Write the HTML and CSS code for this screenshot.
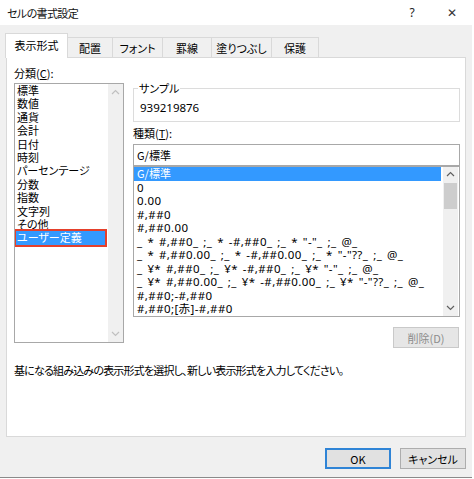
FILE: index.html
```html
<!DOCTYPE html>
<html lang="ja">
<head>
<meta charset="utf-8">
<title>セルの書式設定</title>
<link rel="stylesheet" href="styles.css">
</head>
<body>
<div class="window">
  <div class="titlebar">
    <span class="title">セルの書式設定</span>
    <span class="help">?</span>
    <span class="close">✕</span>
  </div>

  <div class="tabs">
    <div class="tab active t1">表示形式</div>
    <div class="tab t2">配置</div>
    <div class="tab t3">フォント</div>
    <div class="tab t4">罫線</div>
    <div class="tab t5">塗りつぶし</div>
    <div class="tab t6">保護</div>
  </div>

  <div class="panel">
    <div class="panel-main">
      <div class="col-left">
        <div class="label">分類(<u>C</u>):</div>
        <div class="listbox cat">
          <div class="items">
            <div class="item">標準</div>
            <div class="item">数値</div>
            <div class="item">通貨</div>
            <div class="item">会計</div>
            <div class="item">日付</div>
            <div class="item">時刻</div>
            <div class="item">パーセンテージ</div>
            <div class="item">分数</div>
            <div class="item">指数</div>
            <div class="item">文字列</div>
            <div class="item">その他</div>
            <div class="item selected marked">ユーザー定義</div>
          </div>
          <div class="scrollbar disabled">
            <div class="arrow"><svg width="9" height="6" viewBox="0 0 9 6"><path d="M1 5 L4.5 1.5 L8 5" /></svg></div>
            <div class="arrow"><svg width="9" height="6" viewBox="0 0 9 6"><path d="M1 1 L4.5 4.5 L8 1" /></svg></div>
          </div>
        </div>
      </div>

      <div class="col-right">
        <fieldset class="sample">
          <legend>サンプル</legend>
          <div class="sample-value">939219876</div>
        </fieldset>
        <div class="label type-label">種類(<u>T</u>):</div>
        <div class="input">G/標準</div>
        <div class="listbox fmt">
          <div class="items">
            <div class="item selected">G/標準</div>
            <div class="item">0</div>
            <div class="item">0.00</div>
            <div class="item">#,##0</div>
            <div class="item">#,##0.00</div>
            <div class="item">_ * #,##0_ ;_ * -#,##0_ ;_ * "-"_ ;_ @_</div>
            <div class="item">_ * #,##0.00_ ;_ * -#,##0.00_ ;_ * "-"??_ ;_ @_</div>
            <div class="item">_ ¥* #,##0_ ;_ ¥* -#,##0_ ;_ ¥* "-"_ ;_ @_</div>
            <div class="item">_ ¥* #,##0.00_ ;_ ¥* -#,##0.00_ ;_ ¥* "-"??_ ;_ @_</div>
            <div class="item">#,##0;-#,##0</div>
            <div class="item">#,##0;[赤]-#,##0</div>
          </div>
          <div class="scrollbar">
            <div class="arrow"><svg width="9" height="6" viewBox="0 0 9 6"><path d="M1 5 L4.5 1.5 L8 5" /></svg></div>
            <div class="thumb"></div>
            <div class="spacer"></div>
            <div class="arrow"><svg width="9" height="6" viewBox="0 0 9 6"><path d="M1 1 L4.5 4.5 L8 1" /></svg></div>
          </div>
        </div>
        <div class="btn-row">
          <button class="btn disabled">削除(D)</button>
        </div>
      </div>
    </div>
    <p class="desc">基になる組み込みの表示形式を選択し、新しい表示形式を入力してください。</p>
  </div>

  <div class="footer">
    <button class="btn default">OK</button>
    <button class="btn">キャンセル</button>
  </div>
</div>
</body>
</html>
```

FILE: styles.css
```css
* {
  box-sizing: border-box;
}

html, body {
  margin: 0;
  padding: 0;
  background: #ffffff;
}

body {
  width: 474px;
  height: 479px;
  font-family: "Noto Sans CJK JP", "Noto Sans", sans-serif;
  font-size: 11px;
  line-height: 14px;
  color: #000;
  font-feature-settings: "palt";
  overflow: hidden;
}

.window {
  width: 472px;
  height: 478px;
  background: #f0f0f0;
  border-bottom: 1px solid #8a8a8a;
}

/* title bar */
.titlebar {
  height: 25px;
  background: #ffffff;
  display: flex;
  align-items: center;
  padding-left: 7px;
}

.title {
  flex: 1;
  font-size: 11px;
  letter-spacing: -0.6px;
  color: #111;
}

.help {
  width: 20px;
  text-align: center;
  font-family: "Noto Sans", sans-serif;
  font-size: 12px;
  color: #222;
  margin-right: 20px;
}

.close {
  width: 20px;
  text-align: center;
  font-family: "DejaVu Sans", sans-serif;
  font-size: 12px;
  color: #333;
  margin-right: 10px;
}

/* tabs */
.tabs {
  margin-top: 8px;
  height: 24px;
  padding-left: 5px;
  display: flex;
  align-items: flex-end;
}

.tab {
  height: 20px;
  border: 1px solid #d9d9d9;
  border-bottom: none;
  margin-left: -1px;
  background: #f0f0f0;
  display: flex;
  align-items: center;
  justify-content: center;
  padding-top: 1px;
  white-space: nowrap;
}

.tab.active {
  height: 25px;
  margin-left: 0;
  margin-bottom: -1px;
  background: #ffffff;
  position: relative;
  z-index: 1;
  padding-top: 0;
  padding-bottom: 2px;
}

.t1 { width: 63px; }
.t2 { width: 46px; }
.t3 { width: 51px; }
.t4 { width: 50px; }
.t5 { width: 61px; }
.t6 { width: 48px; }

/* panel */
.panel {
  margin-left: 6px;
  width: 460px;
  height: 380px;
  background: #ffffff;
  border: 1px solid #d9d9d9;
  padding: 8px 5px 0 7px;
}

.panel-main {
  display: grid;
  grid-template-columns: 110px 327px;
  column-gap: 9px;
  align-items: start;
}

.label u {
  text-decoration: underline;
  text-underline-offset: 1px;
}

/* list boxes */
.listbox {
  border: 1px solid #a8a8a8;
  background: #fff;
  display: flex;
  overflow: hidden;
}

.listbox .items {
  flex: 1;
  min-width: 0;
}

.item {
  white-space: nowrap;
  padding-left: 2px;
}

.item.selected {
  background: #3399ff;
  color: #ffffff;
}

.cat {
  margin-top: 3px;
  height: 260px;
}

.cat .item {
  height: 13.4px;
  line-height: 13.4px;
  margin: 0 3px 0 1px;
  padding-left: 1px;
}

.cat .item.marked {
  outline: 2px solid #e5402b;
}

.fmt {
  height: 151px;
  padding-right: 1px;
}

.fmt .items {
  margin-right: 2px;
}

.fmt .item {
  height: 13.5px;
  line-height: 13.5px;
  padding-left: 3px;
  font-family: "Noto Sans", "Noto Sans CJK JP", sans-serif;
  font-size: 11.5px;
  letter-spacing: 0.4px;
  word-spacing: 1.5px;
}

.fmt .item.selected {
  font-family: "Noto Sans CJK JP", sans-serif;
  font-size: 11px;
  letter-spacing: 0;
}

/* scrollbars */
.scrollbar {
  width: 15px;
  background: #f0f0f0;
  display: flex;
  flex-direction: column;
  justify-content: space-between;
}

.scrollbar .arrow {
  height: 16px;
  display: flex;
  align-items: center;
  justify-content: center;
}

.scrollbar .arrow path {
  fill: none;
  stroke: #606060;
  stroke-width: 1.2;
}

.scrollbar.disabled .arrow path {
  stroke: #c0c0c0;
}

.fmt .scrollbar .arrow {
  height: 14px;
}

.fmt .scrollbar .arrow:last-child {
  height: 16px;
}

.scrollbar .thumb {
  margin: 2px 1px 0;
  height: 26px;
  background: #cdcdcd;
}

.scrollbar .spacer {
  flex: 1;
}

/* right column */
.col-right {
  padding-top: 15px;
}

.sample {
  margin: 0;
  border: 1px solid #dcdcdc;
  padding: 6px 6px 6px 6px;
  min-width: 0;
}

.sample legend {
  padding: 0 1px;
  margin-left: -2px;
  line-height: 14px;
}

.sample-value {
  font-family: "Noto Sans", "Noto Sans CJK JP", sans-serif;
  font-size: 11.5px;
  height: 14px;
  line-height: 14px;
}

.type-label {
  margin-top: 4px;
}

.input {
  margin-top: 4px;
  height: 22px;
  border: 1px solid #a8a8a8;
  padding-left: 3px;
  display: flex;
  align-items: center;
}

.btn-row {
  margin-top: 10px;
  display: flex;
  justify-content: flex-end;
  padding-right: 1px;
}

/* buttons */
.btn {
  font-family: inherit;
  font-size: 11px;
  font-feature-settings: "palt";
  width: 66px;
  height: 21px;
  padding: 0;
  background: #e1e1e1;
  border: 1px solid #adadad;
  color: #000;
  line-height: 14px;
}

.btn.disabled {
  background: #e6e6e6;
  border-color: #c9c9c9;
  color: #8c8c8c;
}

.btn.default {
  border: 2px solid #2f84d6;
}

.desc {
  margin: 15px 0 0;
  white-space: nowrap;
  letter-spacing: -0.8px;
}

/* footer */
.footer {
  height: 40px;
  padding: 11px 6px 0 0;
  display: flex;
  justify-content: flex-end;
  align-items: flex-start;
  gap: 9px;
}
```
